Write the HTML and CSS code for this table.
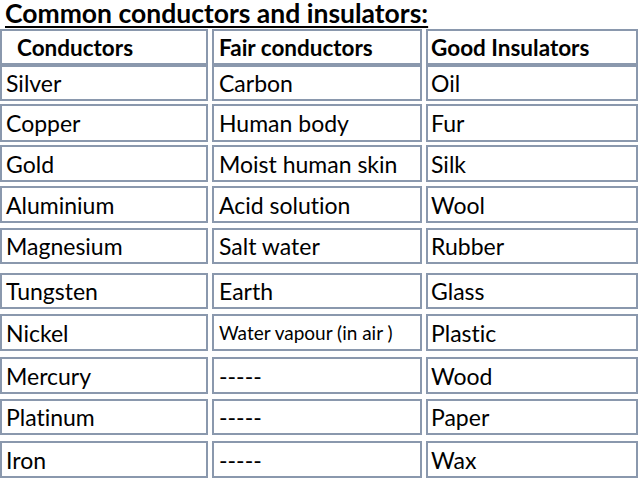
FILE: index.html
```html
<!DOCTYPE html>
<html>
<head>
<meta charset="utf-8">
<link rel="stylesheet" href="styles.css">
</head>
<body>
<div class="slide">
  <h1 class="title">Common conductors and insulators:</h1>
  <div class="table">
    <div class="row head">
      <div class="cell first">Conductors</div>
      <div class="cell">Fair conductors</div>
      <div class="cell">Good Insulators</div>
    </div>
    <div class="row"><div class="cell">Silver</div><div class="cell">Carbon</div><div class="cell">Oil</div></div>
    <div class="row"><div class="cell">Copper</div><div class="cell">Human body</div><div class="cell">Fur</div></div>
    <div class="row"><div class="cell">Gold</div><div class="cell">Moist human skin</div><div class="cell">Silk</div></div>
    <div class="row"><div class="cell">Aluminium</div><div class="cell">Acid solution</div><div class="cell">Wool</div></div>
    <div class="row"><div class="cell">Magnesium</div><div class="cell">Salt water</div><div class="cell">Rubber</div></div>
    <div class="row"><div class="cell">Tungsten</div><div class="cell">Earth</div><div class="cell">Glass</div></div>
    <div class="row"><div class="cell">Nickel</div><div class="cell small">Water vapour (in air )</div><div class="cell">Plastic</div></div>
    <div class="row"><div class="cell">Mercury</div><div class="cell">-----</div><div class="cell">Wood</div></div>
    <div class="row"><div class="cell">Platinum</div><div class="cell">-----</div><div class="cell">Paper</div></div>
    <div class="row"><div class="cell">Iron</div><div class="cell">-----</div><div class="cell">Wax</div></div>
  </div>
</div>
</body>
</html>
```
FILE: styles.css
```css
html, body {
  margin: 0;
  padding: 0;
  background: #ffffff;
}
body {
  width: 638px;
  height: 478px;
  overflow: hidden;
  font-family: Lato, "Open Sans", sans-serif;
  font-variant-ligatures: none;
  color: #000;
}
.slide {
  display: flex;
  flex-direction: column;
}
.title {
  margin: 0;
  padding-left: 5px;
  height: 29px;
  font-size: 26.5px;
  font-weight: 700;
  line-height: 26px;
  text-decoration: underline;
  text-decoration-thickness: 2px;
  text-underline-offset: 3px;
}
.table {
  display: flex;
  flex-direction: column;
}
.row {
  display: grid;
  grid-template-columns: 208px 210px 1fr;
  column-gap: 4px;
  height: 37px;
  margin-top: 4px;
}
.row.head {
  margin-top: 0;
  height: 36px;
}
.row:nth-child(2) { margin-top: 0; height: 36px; }
.row:nth-child(3) { margin-top: 3px; height: 38px; }
.row:nth-child(4) { margin-top: 3px; }
.row:nth-child(6) { margin-top: 5px; height: 36px; }
.row:nth-child(7) { margin-top: 9px; height: 36px; }
.row:nth-child(8) { margin-top: 5px; }
.row:nth-child(9) { margin-top: 6px; }
.row:nth-child(10) { margin-top: 5px; height: 36px; }
.row:nth-child(11) { margin-top: 6px; }
.cell {
  box-sizing: border-box;
  border: 2px solid #8a98ad;
  display: flex;
  align-items: center;
  padding-left: 4px;
  font-size: 23px;
  white-space: nowrap;
}
.cell:nth-child(2) { padding-left: 5px; }
.cell:nth-child(3) { padding-left: 3px; }
.head .cell { font-weight: 700; font-size: 22.5px; }
.head .cell.first { padding-left: 15px; }
.cell.small { font-size: 19px; }
```
